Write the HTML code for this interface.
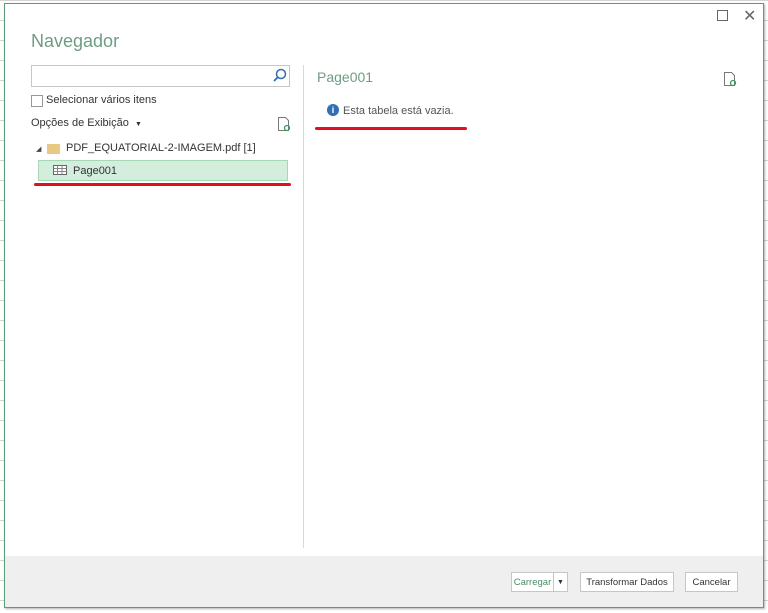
<!DOCTYPE html>
<html><head><style>
body{margin:0;width:768px;height:613px;position:relative;overflow:hidden;background:#fff;font-family:"Liberation Sans",sans-serif;
background-image:linear-gradient(#d4d4d4 1px,transparent 1px);background-size:100% 20px;}
.dlg{position:absolute;left:4px;top:3px;width:758px;height:603px;border:1px solid #5a9e78;background:#fff;box-shadow:1px 1px 2px rgba(0,0,0,.3)}
.abs{position:absolute}
.foot{position:absolute;left:0;right:0;top:552px;bottom:0;background:#efefef}
.btn{position:absolute;top:572px;height:20px;border:1px solid #c6c6c6;background:#fff;font-size:9.5px;color:#333;text-align:center;line-height:19px;box-sizing:border-box;white-space:nowrap}
</style></head><body>
<div class="dlg">
<div class="abs" style="left:712px;top:6px;width:9px;height:9px;border:1px solid #666"></div>
<div class="abs" style="left:738px;top:2px;font-size:16px;color:#666">✕</div>
<div class="abs" style="left:26px;top:27px;font-size:18px;color:#6f9c84">Navegador</div>
<div class="abs" style="left:26px;top:61px;width:257px;height:20px;border:1px solid #c6c6c6"></div>
<svg class="abs" style="left:268px;top:64px" width="14" height="14"><circle cx="8" cy="6" r="4.5" stroke="#2f6fb3" stroke-width="1.5" fill="none"/><line x1="5" y1="9" x2="1" y2="13" stroke="#2f6fb3" stroke-width="1.8"/></svg>
<div class="abs" style="left:26px;top:91px;width:10px;height:10px;border:1px solid #999"></div>
<div class="abs" style="left:41px;top:90px;font-size:11px;color:#333">Selecionar vários itens</div>
<div class="abs" style="left:26px;top:113px;font-size:11px;color:#333">Opções de Exibição &nbsp;<span style="font-size:7px">▼</span></div>
<svg class="abs" style="left:272px;top:113px" width="14" height="15"><path d="M1.5 0.5h7l3 3v10h-10z" fill="none" stroke="#777"/><circle cx="10" cy="11" r="2.5" fill="none" stroke="#3a9a5a" stroke-width="1.3"/></svg>
<div class="abs" style="left:31px;top:141px;font-size:7px;color:#444">◢</div>
<div class="abs" style="left:42px;top:140px;width:13px;height:10px;background:#e8c883"></div>
<div class="abs" style="left:61px;top:138px;font-size:11px;color:#333">PDF_EQUATORIAL-2-IMAGEM.pdf [1]</div>
<div class="abs" style="left:33px;top:156px;width:250px;height:21px;background:#d3eedd;border:1px solid #a6d8b8;box-sizing:border-box"></div>
<svg class="abs" style="left:48px;top:161px" width="14" height="11"><rect x=".5" y=".5" width="13" height="9" fill="#fff" stroke="#666"/><path d="M.5 3.5h13M4.5 .5v9M9 .5v9M.5 6.5h13" stroke="#888" fill="none"/></svg>
<div class="abs" style="left:68px;top:161px;font-size:11px;color:#333">Page001</div>
<div class="abs" style="left:29px;top:179px;width:257px;height:3px;background:#e01020;border-radius:2px"></div>
<div class="abs" style="left:298px;top:61px;width:1px;height:483px;background:#d8d8d8"></div>
<div class="abs" style="left:312px;top:65px;font-size:14px;color:#6f9c84">Page001</div>
<svg class="abs" style="left:718px;top:68px" width="14" height="15"><path d="M1.5 0.5h7l3 3v10h-10z" fill="none" stroke="#777"/><circle cx="10" cy="11" r="2.5" fill="none" stroke="#3a9a5a" stroke-width="1.3"/></svg>
<div class="abs" style="left:322px;top:100px;width:12px;height:12px;border-radius:50%;background:#2f6fb3;color:#fff;font-size:9px;font-weight:bold;text-align:center;line-height:12px">i</div>
<div class="abs" style="left:338px;top:101px;font-size:11px;color:#555">Esta tabela está vazia.</div>
<div class="abs" style="left:310px;top:123px;width:152px;height:3px;background:#e01020;border-radius:2px"></div>
<div class="foot"></div>
</div>
<div class="btn" style="left:511px;width:43px;color:#4a8c66">Carregar</div>
<div class="btn" style="left:553px;width:15px;font-size:7px">▼</div>
<div class="btn" style="left:580px;width:94px">Transformar Dados</div>
<div class="btn" style="left:685px;width:53px">Cancelar</div>
</body></html>
